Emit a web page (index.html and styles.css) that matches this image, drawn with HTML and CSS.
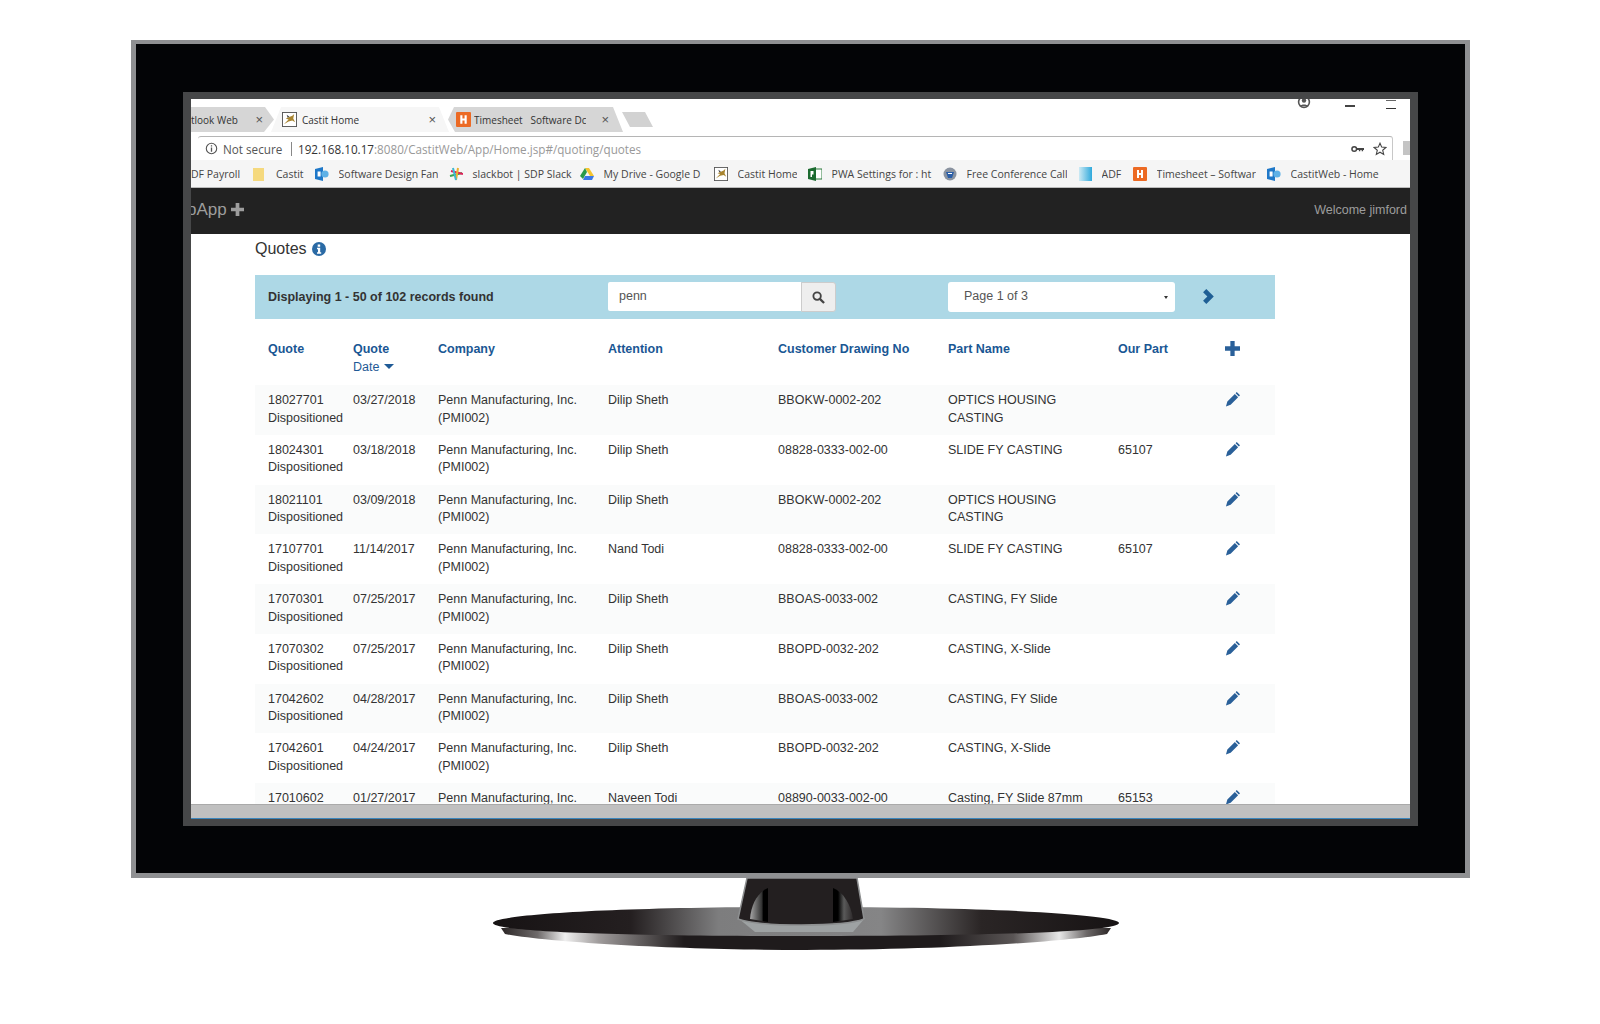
FILE: index.html
```html
<!DOCTYPE html>
<html lang="en">
<head>
<meta charset="utf-8">
<title>Castit Home</title>
<link rel="stylesheet" href="styles.css">
</head>
<body>
<svg class="defs" width="0" height="0" aria-hidden="true">
  <defs>
    <symbol id="i-pencil" viewBox="0 0 16 16"><path d="M2.500 10L10.500 2l3.500 3.500-8 8L1 15.500zM11.300 1.200L12.500 0 16 3.500l-1.200 1.200z"/></symbol>
    <symbol id="i-plus" viewBox="0 0 14 14"><path d="M5 0h4v5h5v4H9v5H5V9H0V5h5z"/></symbol>
    <symbol id="i-sp" viewBox="0 0 14 14"><path fill="#1f78c8" d="M0 2l8-2v14l-8-2z"/><circle cx="10" cy="7" r="3.600" fill="#5fb1e6"/><rect x="2.600" y="4.500" width="3" height="5" fill="#fff"/></symbol>
    <symbol id="i-h" viewBox="0 0 14 14"><rect width="14" height="14" rx="1" fill="#ec6a24"/><path fill="#fff" d="M4 3h2v3h2V3h2v8H8V8H6v3H4z"/></symbol>
    <symbol id="i-castit" viewBox="0 0 16 16"><rect x=".5" y=".5" width="15" height="15" fill="#fff" stroke="#555"/><path fill="#a8842f" d="M2 13l5-5-3-1 7-3 2-2-1 5 2 4-3-2-4 1z"/><path fill="#444" d="M5 3l3 2-2 1z"/></symbol>
  </defs>
</svg>

<div class="monitor">
  <div class="bezel">
    <div class="screen">

      <div class="tabstrip">
        <div class="tab tab-first"><span class="tab-title">tlook Web</span><span class="tab-x">×</span></div>
        <div class="tab tab-active">
          <svg class="fav"><use href="#i-castit"/></svg>
          <span class="tab-title">Castit Home</span><span class="tab-x">×</span>
        </div>
        <div class="tab tab-third">
          <svg class="fav"><use href="#i-h"/></svg>
          <span class="tab-title">Timesheet&nbsp;&nbsp; Software Dc</span><span class="tab-x">×</span>
        </div>
        <div class="tab-new"></div>
        <div class="winctl">
          <svg class="win-user" viewBox="0 0 14 14"><circle cx="7" cy="3" r="5.400" fill="none" stroke="#555" stroke-width="1.600"/><circle cx="7" cy="1.600" r="2.200" fill="#555"/><path fill="#555" d="M3 7c1-2 7-2 8 0z"/></svg>
          <span class="win-min"></span>
          <span class="win-max"></span>
        </div>
      </div>

      <div class="addr-row">
        <div class="omnibox">
          <svg class="omni-info" viewBox="0 0 14 14"><circle cx="7" cy="7" r="5.600" fill="none" stroke="#555" stroke-width="1.200"/><path fill="#555" d="M6.300 3.500h1.400v1.400H6.300zM6.300 6h1.400v4.500H6.300z"/></svg>
          <span class="omni-secure">Not secure</span>
          <span class="omni-sep"></span>
          <span class="omni-url"><b>192.168.10.17</b>:8080/CastitWeb/App/Home.jsp#/quoting/quotes</span>
          <svg class="omni-key" viewBox="0 0 14 8"><circle cx="3.500" cy="4" r="2.500" fill="none" stroke="#444" stroke-width="1.600"/><path fill="#444" d="M6 3h8v2h-1v1.500h-1.500V5H10v1.500H8.500V5H6z"/></svg>
          <svg class="omni-star" viewBox="0 0 14 14"><path fill="none" stroke="#444" stroke-width="1.100" d="M7 1.200l1.700 3.900 4.200.4-3.200 2.800 1 4.100L7 10.200l-3.700 2.200 1-4.100L1.100 5.500l4.200-.4z"/></svg>
        </div>
        <div class="ext-btn"></div>
      </div>

      <div class="bookmarks">
        <span class="bm-text bm-cut">DF Payroll</span>
        <svg class="bm-ic"><rect x="1" y="1" width="11" height="13" fill="#f5d97e"/></svg>
        <span class="bm-text">Castit</span>
        <svg class="bm-ic"><use href="#i-sp"/></svg>
        <span class="bm-text bm-long">Software Design Fan</span>
        <svg class="bm-ic" viewBox="0 0 14 14"><path stroke-width="2" stroke="#36a64f" d="M1 9l12-3"/><path stroke-width="2" stroke="#e01e5a" d="M2 4l12 3"/><path stroke-width="2" stroke="#ecb22e" d="M9 1l-2 12"/><path stroke-width="2" stroke="#3eb8d0" d="M4 1l3 12"/></svg>
        <span class="bm-text bm-short">slackbot | SDP Slack</span>
        <svg class="bm-ic" viewBox="0 0 14 14"><path fill="#f4c430" d="M5 1h4l5 8h-4z"/><path fill="#2a9a4a" d="M5 1l2 4-4 7-3-3z"/><path fill="#3b78e7" d="M3 13l2-4h9l-2 4z"/></svg>
        <span class="bm-text bm-long">My Drive - Google D</span>
        <svg class="bm-ic"><use href="#i-castit"/></svg>
        <span class="bm-text bm-home">Castit Home</span>
        <svg class="bm-ic" viewBox="0 0 14 14"><rect x="5" y="2" width="9" height="10" fill="#fff" stroke="#2a7a3a"/><path fill="#1c6b30" d="M0 2l8-2v14l-8-2z"/><path fill="#fff" d="M2.500 4h3v3.500H4V10H2.500z"/></svg>
        <span class="bm-text bm-wide">PWA Settings for : ht</span>
        <svg class="bm-ic" viewBox="0 0 14 14"><circle cx="7" cy="7" r="6.500" fill="#8a93a0"/><path fill="#2a5ea8" d="M3 5h8l-2 6H5z"/><path fill="#fff" d="M5 6h4v1H5z"/></svg>
        <span class="bm-text bm-wide">Free Conference Call</span>
        <svg class="bm-ic" viewBox="0 0 14 14"><defs><linearGradient id="adf"><stop offset="0" stop-color="#cdeaf4"/><stop offset="1" stop-color="#2fa9dc"/></linearGradient></defs><rect x="1" y="0" width="13" height="14" fill="url(#adf)"/></svg>
        <span class="bm-text bm-adf">ADF</span>
        <svg class="bm-ic"><use href="#i-h"/></svg>
        <span class="bm-text bm-long">Timesheet – Softwar</span>
        <svg class="bm-ic"><use href="#i-sp"/></svg>
        <span class="bm-text">CastitWeb - Home</span>
      </div>

      <nav class="appnav">
        <div class="brand">pApp<svg class="brand-plus"><use href="#i-plus"/></svg></div>
        <div class="welcome">Welcome jimford</div>
      </nav>

      <main class="viewport">
        <h1 class="page-title">Quotes
          <svg class="title-info" viewBox="0 0 14 14"><circle cx="7" cy="7" r="7" fill="#2a6aa5"/><path fill="#fff" d="M5.700 2.500h2.500v2.200H5.700zM5 5.700h3.200v4.500H9.200v1.500H5v-1.500h1V7.200H5z"/></svg>
        </h1>

        <div class="toolbar">
          <div class="tb-count">Displaying 1 - 50 of 102 records found</div>
          <div class="tb-search">
            <div class="search-input">penn</div>
            <div class="search-btn"><svg viewBox="0 0 14 14"><circle cx="5.500" cy="5.500" r="4" fill="none" stroke="#444" stroke-width="2"/><path stroke="#444" stroke-width="2.400" d="M8.500 8.500l4.500 4.500"/></svg></div>
          </div>
          <div class="tb-page"><div class="page-select">Page 1 of 3<span class="caret-small"></span></div></div>
          <div class="tb-next"><svg viewBox="0 0 12 14"><path fill="#1f5f95" d="M3 0l7 7-7 7-3-3 4-4-4-4z"/></svg></div>
        </div>

        <div class="qrow qhead">
          <div class="c1"><b>Quote</b></div>
          <div class="c1"><b>Quote</b><br>Date <span class="sort"></span></div>
          <div class="c2"><b>Company</b></div>
          <div class="c2"><b>Attention</b></div>
          <div class="c2"><b>Customer Drawing No</b></div>
          <div class="c2"><b>Part Name</b></div>
          <div class="c1"><b>Our Part</b></div>
          <div class="c1 cicon"><svg class="ic"><use href="#i-plus"/></svg></div>
        </div>

        <div class="qrow">
          <div class="c1">18027701<br>Dispositioned</div><div class="c1">03/27/2018</div>
          <div class="c2">Penn Manufacturing, Inc.<br>(PMI002)</div><div class="c2">Dilip Sheth</div>
          <div class="c2">BBOKW-0002-202</div><div class="c2">OPTICS HOUSING<br>CASTING</div>
          <div class="c1"></div><div class="c1 cicon"><svg class="ic"><use href="#i-pencil"/></svg></div>
        </div>
        <div class="qrow">
          <div class="c1">18024301<br>Dispositioned</div><div class="c1">03/18/2018</div>
          <div class="c2">Penn Manufacturing, Inc.<br>(PMI002)</div><div class="c2">Dilip Sheth</div>
          <div class="c2">08828-0333-002-00</div><div class="c2">SLIDE FY CASTING</div>
          <div class="c1">65107</div><div class="c1 cicon"><svg class="ic"><use href="#i-pencil"/></svg></div>
        </div>
        <div class="qrow">
          <div class="c1">18021101<br>Dispositioned</div><div class="c1">03/09/2018</div>
          <div class="c2">Penn Manufacturing, Inc.<br>(PMI002)</div><div class="c2">Dilip Sheth</div>
          <div class="c2">BBOKW-0002-202</div><div class="c2">OPTICS HOUSING<br>CASTING</div>
          <div class="c1"></div><div class="c1 cicon"><svg class="ic"><use href="#i-pencil"/></svg></div>
        </div>
        <div class="qrow">
          <div class="c1">17107701<br>Dispositioned</div><div class="c1">11/14/2017</div>
          <div class="c2">Penn Manufacturing, Inc.<br>(PMI002)</div><div class="c2">Nand Todi</div>
          <div class="c2">08828-0333-002-00</div><div class="c2">SLIDE FY CASTING</div>
          <div class="c1">65107</div><div class="c1 cicon"><svg class="ic"><use href="#i-pencil"/></svg></div>
        </div>
        <div class="qrow">
          <div class="c1">17070301<br>Dispositioned</div><div class="c1">07/25/2017</div>
          <div class="c2">Penn Manufacturing, Inc.<br>(PMI002)</div><div class="c2">Dilip Sheth</div>
          <div class="c2">BBOAS-0033-002</div><div class="c2">CASTING, FY Slide</div>
          <div class="c1"></div><div class="c1 cicon"><svg class="ic"><use href="#i-pencil"/></svg></div>
        </div>
        <div class="qrow">
          <div class="c1">17070302<br>Dispositioned</div><div class="c1">07/25/2017</div>
          <div class="c2">Penn Manufacturing, Inc.<br>(PMI002)</div><div class="c2">Dilip Sheth</div>
          <div class="c2">BBOPD-0032-202</div><div class="c2">CASTING, X-Slide</div>
          <div class="c1"></div><div class="c1 cicon"><svg class="ic"><use href="#i-pencil"/></svg></div>
        </div>
        <div class="qrow">
          <div class="c1">17042602<br>Dispositioned</div><div class="c1">04/28/2017</div>
          <div class="c2">Penn Manufacturing, Inc.<br>(PMI002)</div><div class="c2">Dilip Sheth</div>
          <div class="c2">BBOAS-0033-002</div><div class="c2">CASTING, FY Slide</div>
          <div class="c1"></div><div class="c1 cicon"><svg class="ic"><use href="#i-pencil"/></svg></div>
        </div>
        <div class="qrow">
          <div class="c1">17042601<br>Dispositioned</div><div class="c1">04/24/2017</div>
          <div class="c2">Penn Manufacturing, Inc.<br>(PMI002)</div><div class="c2">Dilip Sheth</div>
          <div class="c2">BBOPD-0032-202</div><div class="c2">CASTING, X-Slide</div>
          <div class="c1"></div><div class="c1 cicon"><svg class="ic"><use href="#i-pencil"/></svg></div>
        </div>
        <div class="qrow">
          <div class="c1">17010602<br>Dispositioned</div><div class="c1">01/27/2017</div>
          <div class="c2">Penn Manufacturing, Inc.<br>(PMI002)</div><div class="c2">Naveen Todi</div>
          <div class="c2">08890-0033-002-00</div><div class="c2">Casting, FY Slide 87mm</div>
          <div class="c1">65153</div><div class="c1 cicon"><svg class="ic"><use href="#i-pencil"/></svg></div>
        </div>
      </main>

      <div class="hscroll"></div>
    </div>
  </div>
</div>

<svg class="stand" width="626" height="76" viewBox="0 0 626 76">
  <defs>
    <linearGradient id="topg" x1="0" x2="1" y1="0" y2="0">
      <stop offset="0" stop-color="#171314"/>
      <stop offset=".22" stop-color="#241f20"/>
      <stop offset=".36" stop-color="#7d7d7e"/>
      <stop offset=".62" stop-color="#858586"/>
      <stop offset=".78" stop-color="#2a2525"/>
      <stop offset="1" stop-color="#171314"/>
    </linearGradient>
    <linearGradient id="rimg" x1="0" x2="1" y1="0" y2="0">
      <stop offset="0" stop-color="#2a2525"/>
      <stop offset=".06" stop-color="#6e6a6a"/>
      <stop offset=".105" stop-color="#efefef"/>
      <stop offset=".16" stop-color="#a09c9c"/>
      <stop offset=".3" stop-color="#1f1b1c"/>
      <stop offset=".72" stop-color="#1f1b1c"/>
      <stop offset=".84" stop-color="#5a5555"/>
      <stop offset=".915" stop-color="#e8e8e8"/>
      <stop offset=".96" stop-color="#6c6868"/>
      <stop offset="1" stop-color="#2a2525"/>
    </linearGradient>
    <linearGradient id="hl-l" x1="0" x2="1" y1="0" y2="0">
      <stop offset="0" stop-color="#a6a6a6"/>
      <stop offset=".65" stop-color="#333"/>
      <stop offset=".75" stop-color="#000"/>
    </linearGradient>
    <linearGradient id="hl-r" x1="0" x2="1" y1="0" y2="0">
      <stop offset=".25" stop-color="#000"/>
      <stop offset=".55" stop-color="#5a5a5a"/>
      <stop offset="1" stop-color="#2e2a2b"/>
    </linearGradient>
  </defs>
  <path fill="url(#rimg)" d="M8 50L12 56C60 65 190 72 313 72C436 72 566 65 614 56L618 50z"/>
  <path fill="url(#topg)" d="M0 45C0 38 100 29 313 29C526 29 626 38 626 45C626 52 540 58 313 58C86 58 0 52 0 45z"/>
  <path fill="#9ea2a3" d="M245 40L262 54H360L372 40z"/>
  <path fill="#231f20" stroke="#8d8f90" stroke-width="1.500" d="M254 0H364L371 41C350 49 268 49 245 41z"/>
  <path fill="url(#hl-l)" d="M275 10C265 14 258 26 257 41L275 44z"/>
  <path fill="url(#hl-r)" d="M340 10C350 14 358 26 360 41L340 44z"/>
</svg>
</body>
</html>
```
FILE: styles.css
```css
* { box-sizing: border-box; }
html, body { margin: 0; padding: 0; background: #fff; }
body { font-family: "Liberation Sans", Arial, sans-serif; font-size: 12.5px; color: #333; padding: 40px 0 0 131px; height: 1024px; overflow: hidden; }
.defs { display: block; height: 0; }

.monitor { width: 1339px; height: 838px; background: #030406; border: 5px solid #8f9092; border-top-width: 4px; padding: 48px 47px 47px; }
.bezel { height: 100%; border: 8px solid #464748; border-top-width: 7px; border-bottom-width: 7px; background: #fff; }
.screen { height: 100%; display: flex; flex-direction: column; overflow: hidden; background: #fff; }

/* browser tabs */
.tabstrip { height: 37px; flex: none; display: flex; align-items: flex-end; padding-bottom: 4px; position: relative; font-family: "Open Sans", sans-serif; font-size: 10px; color: #333; }
.tab { height: 25px; display: flex; align-items: center; flex: none; }
.tab-title { white-space: nowrap; overflow: hidden; }
.tab-x { font-family: "Liberation Sans", sans-serif; font-size: 13px; color: #555; margin-left: auto; }
.tab-first { width: 83px; padding-right: 11px; background: #d6d6d6; clip-path: polygon(0 0, 74px 0, 83px 50%, 73px 100%, 0 100%); }
.tab-active { width: 178px; margin-left: -3px; background: #f6f6f6; padding: 0 13px 0 11px; clip-path: polygon(0 100%, 10px 0, 168px 0, 178px 100%); }
.tab-third { width: 175px; margin-left: -1px; background: #d6d6d6; padding: 0 14px 0 8px; clip-path: polygon(0 50%, 6px 0, 165px 0, 175px 100%, 7px 100%); }
.fav { width: 15px; height: 15px; margin-right: 5px; flex: none; }
.tab-third .fav { margin-right: 3px; }
.tab-new { width: 31px; height: 15px; margin: 0 0 5px -1px; background: #d2d2d2; clip-path: polygon(0 0, 23px 0, 31px 100%, 8px 100%); flex: none; }
.winctl { position: absolute; right: 0; top: 0; width: 120px; height: 14px; overflow: hidden; }
.win-user { position: absolute; left: 7px; top: 0; width: 14px; height: 14px; }
.win-min { position: absolute; left: 55px; top: 6px; width: 10px; height: 1.500px; background: #444; }
.win-max { position: absolute; left: 96px; top: 1px; width: 10px; height: 9px; border-top: 1.500px solid #666; border-bottom: 1.500px solid #333; }

/* address bar */
.addr-row { height: 24px; flex: none; display: flex; padding-left: 7px; }
.omnibox { width: 1195px; border-top: 1px solid #b5b5b5; border-right: 1px solid #c8c8c8; display: flex; align-items: center; padding: 0 5px 0 7px; font-family: "Open Sans", sans-serif; font-size: 11.700px; color: #666; border-radius: 3px 3px 0 0; background: #fff; }
.omni-info { width: 13px; height: 13px; flex: none; margin-right: 5px; }
.omni-secure { color: #555; width: 68px; flex: none; overflow: hidden; white-space: nowrap; }
.omni-sep { width: 1px; height: 14px; background: #888; flex: none; margin-right: 6px; }
.omni-url { color: #999; white-space: nowrap; }
.omni-url b { font-weight: 400; color: #333; }
.omni-key { width: 13px; height: 8px; margin-left: auto; flex: none; }
.omni-star { width: 14px; height: 14px; flex: none; margin-left: 9px; }
.ext-btn { width: 7px; height: 14px; margin: 5px 0 0 10px; background: #c4c4c4; flex: none; }

/* bookmarks */
.bookmarks { height: 28px; flex: none; display: flex; align-items: center; background: #f5f5f5; border-bottom: 1px solid #bbb; overflow: hidden; font-family: "Open Sans", sans-serif; font-size: 10.500px; color: #444; white-space: nowrap; }
.bm-ic { width: 14px; height: 14px; margin: 0 10px 0 11px; flex: none; }
.bm-text { flex: none; overflow: hidden; }
.bm-long { width: 99px; }
.bm-short { width: 96px; overflow: visible; }
.bm-wide { width: 100px; }
.bm-home { width: 59px; }
.bm-adf { width: 20px; }
.bm-cut { width: 50px; }

/* app nav */
.appnav { height: 46px; flex: none; background: #222; display: flex; align-items: center; justify-content: space-between; color: #9d9d9d; padding: 0 3px 3px 0; }
.brand { font-size: 17px; margin-left: -4px; display: flex; align-items: center; }
.brand-plus { width: 13px; height: 13px; fill: #9d9d9d; margin-left: 4px; }
.welcome { font-size: 12.500px; }

/* content */
.viewport { flex: 1; min-height: 0; overflow: hidden; padding-left: 64px; background: #fff; }
.page-title { margin: 0; height: 41px; padding-bottom: 12px; font-size: 16px; font-weight: 400; line-height: 20px; display: flex; align-items: center; gap: 5px; }
.title-info { width: 14px; height: 14px; }

.toolbar, .qrow { width: 1020px; display: grid; grid-template-columns: repeat(12, 85px); }
.toolbar { background: #add8e6; height: 44px; align-items: center; }
.tb-count { grid-column: span 4; padding-left: 13px; font-weight: 700; }
.tb-search { grid-column: span 4; padding-left: 13px; display: flex; }
.search-input { width: 193px; height: 29px; background: #fff; padding-left: 11px; line-height: 28px; color: #555; border-radius: 2px 0 0 2px; }
.search-btn { width: 35px; height: 30px; background: #eee; border: 1px solid #ccc; border-radius: 0 3px 3px 0; display: flex; align-items: center; justify-content: center; }
.search-btn svg { width: 13px; height: 13px; }
.tb-page { grid-column: span 3; padding-left: 13px; }
.page-select { width: 227px; height: 30px; background: #fff; border-radius: 3px; padding-left: 16px; line-height: 29px; color: #555; position: relative; }
.caret-small { position: absolute; right: 7px; top: 14px; border: 2.500px solid transparent; border-top: 3px solid #333; border-bottom: 0; }
.tb-next { grid-column: span 1; padding: 0 0 2px 13px; display: flex; }
.tb-next svg { width: 13px; height: 15px; }

.qrow { height: 49.750px; line-height: 17.500px; padding-top: 7px; }
.qrow > div { padding-left: 13px; white-space: nowrap; }
.c1 { grid-column: span 1; }
.c2 { grid-column: span 2; }
.qrow > .cicon { padding-left: 35px; }
.ic { width: 15px; height: 15px; fill: #2a6099; display: block; }

.qhead { height: 66px; padding-top: 22px; color: #1f5a96; }
.qhead b { color: #1a5794; }
.sort { display: inline-block; vertical-align: 2px; margin-left: 1px; border: 5px solid transparent; border-top: 5px solid #1f5a96; border-bottom: 0; }
.qrow:nth-child(even) { background: #fafbfb; }

.hscroll { height: 15px; flex: none; background: #c0c0c0; border-top: 1px solid #aaa; border-bottom: 1px solid #3b86bd; }

/* stand */
.stand { display: block; margin-left: 362px; }
```
